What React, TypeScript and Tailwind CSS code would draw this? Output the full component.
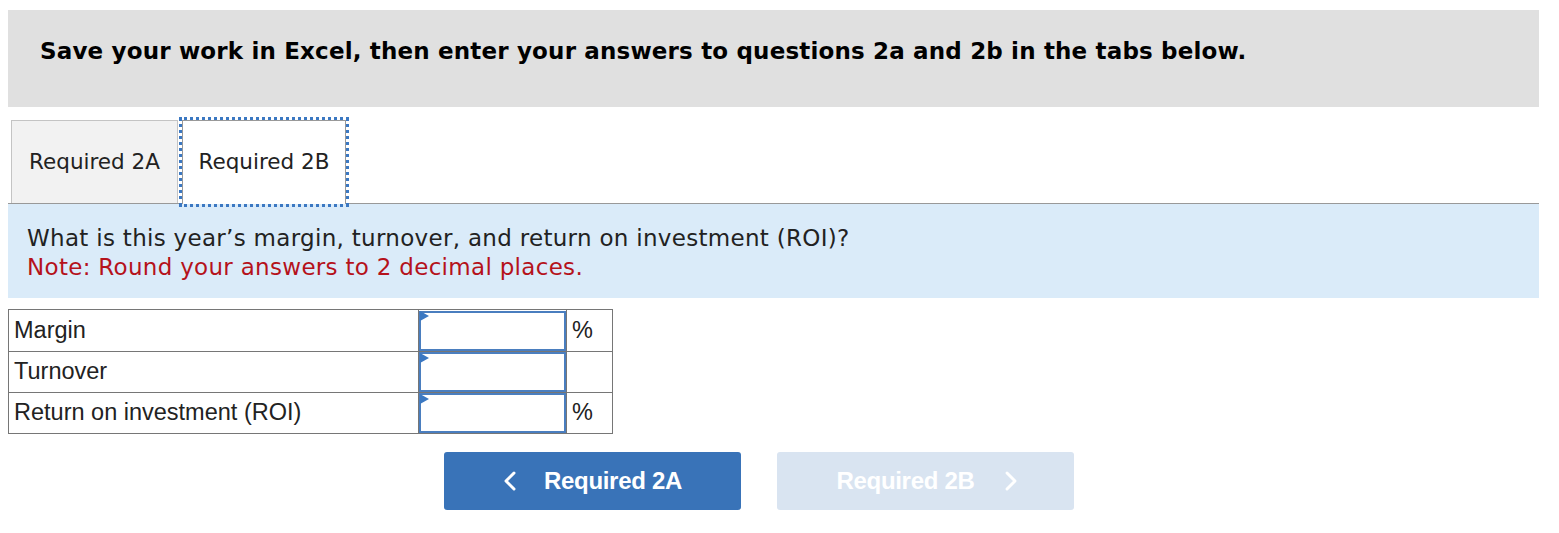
const ROWS = [
  { label: 'Margin', unit: '%' },
  { label: 'Turnover', unit: '' },
  { label: 'Return on investment (ROI)', unit: '%' },
]

function Chevron({ dir }: { dir: 'left' | 'right' }) {
  return (
    <svg width="14" height="22" viewBox="0 0 14 22" fill="none" stroke="currentColor" strokeWidth="3" strokeLinecap="round" strokeLinejoin="round">
      {dir === 'left' ? <path d="M11 3 L3 11 L11 19" /> : <path d="M3 3 L11 11 L3 19" />}
    </svg>
  )
}

function AnswerCell() {
  return (
    <td className="w-[148px] p-0 border border-[#767676] relative">
      <div className="h-[40px] border-2 border-[#4a7ebf] bg-white" />
      <span className="absolute left-[1px] top-[1px] w-0 h-0 border-y-[5px] border-y-transparent border-l-[9px] border-l-[#3b78c2]" />
    </td>
  )
}

export default function App() {
  return (
    <div className="bg-white w-[1559px] h-[533px] pl-[8px] pr-[20px] pt-[10px]" style={{ fontFamily: '"DejaVu Sans", Verdana, sans-serif' }}>
      {/* Instructions */}
      <div className="bg-[#e0e0e0] h-[97px] pl-[32px] pt-[24px]">
        <div className="font-bold text-[23px] text-black tracking-[0.17px]">
          Save your work in Excel, then enter your answers to questions 2a and 2b in the tabs below.
        </div>
      </div>

      {/* Tabs */}
      <div className="mt-[13px] flex items-end border-b border-[#999] pl-[3px]">
        <div className="w-[167px] h-[83px] bg-[#f2f2f2] border border-b-0 border-[#c4c4c4] flex items-center justify-center text-[21.5px] text-[#222]">
          Required 2A
        </div>
        <div className="ml-[4px] w-[164px] h-[84px] -mb-px bg-white border border-b-0 border-[#999] flex items-center justify-center text-[21.5px] text-[#222] outline-[3px] outline-dotted outline-[#3b78c2] outline-offset-[0px]">
          Required 2B
        </div>
      </div>

      {/* Question */}
      <div className="bg-[#daebf9] h-[94px] pl-[19px] pt-[20px] text-[23px] leading-[29px] tracking-[0.3px]">
        <div className="text-[#222]">What is this year’s margin, turnover, and return on investment (ROI)?</div>
        <div className="text-[#b5121b]">Note: Round your answers to 2 decimal places.</div>
      </div>

      {/* Answer table */}
      <table className="mt-[11px] border-collapse text-[23.5px] text-[#222]" style={{ fontFamily: '"Liberation Sans", Arial, sans-serif' }}>
        <tbody>
          {ROWS.map((r, i) => (
            <tr key={r.label} className={i === 0 ? 'h-[42px]' : 'h-[41px]'}>
              <td className="w-[410px] border border-[#767676] px-[5px] py-0 leading-none">{r.label}</td>
              <AnswerCell />
              <td className="w-[46px] border border-[#767676] px-[5px] py-0 leading-none">{r.unit}</td>
            </tr>
          ))}
        </tbody>
      </table>

      {/* Navigation */}
      <div className="mt-[18px] flex gap-[36px] pl-[436px]" style={{ fontFamily: '"Liberation Sans", Arial, sans-serif' }}>
        <button className="w-[297px] h-[58px] rounded-[3px] bg-[#3973b8] text-white font-bold text-[24px] tracking-[-0.3px] flex items-center justify-center gap-[27px]">
          <Chevron dir="left" />
          <span>Required 2A</span>
        </button>
        <button className="w-[297px] h-[58px] rounded-[3px] bg-[#d9e4f1] text-white font-bold text-[24px] tracking-[-0.3px] flex items-center justify-center gap-[29px] pl-[3px]">
          <span>Required 2B</span>
          <Chevron dir="right" />
        </button>
      </div>
    </div>
  )
}
